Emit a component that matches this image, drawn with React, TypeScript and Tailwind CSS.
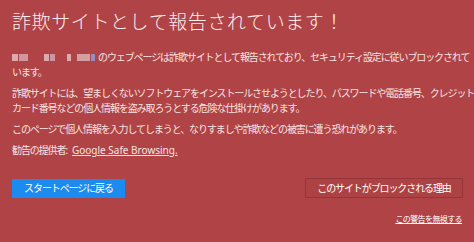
import React from 'react'

const font = "font-['Noto_Sans','Noto_Sans_CJK_JP',sans-serif]"

const Blur = ({ w, tint = 'bg-[#e7c3c6]' }: { w: string; tint?: string }) => (
  <span className={`inline-block h-[7px] ${w} ${tint} opacity-80 blur-[0.4px] align-middle`} />
)

const App: React.FC = () => {
  return (
    <div className={`w-[474px] h-[242px] overflow-hidden bg-[#b04345] text-[#f6e4e4] ${font}`}>
      <div className="px-3 pt-[7px]">
        <h1 className="text-[19px] leading-[30px] font-light tracking-[0.6px] text-[#fbeeee]">
          詐欺サイトとして報告されています！
        </h1>

        <div className="mt-[13px] text-[10px] leading-[15px] tracking-[-1.1px] flex flex-col gap-[6px] whitespace-nowrap">
          <p>
            <span className="inline-flex items-center gap-[1px] mr-[3px] tracking-normal">
              <Blur w="w-[6px]" />
              <Blur w="w-[9px]" tint="bg-[#d9aeb2]" />
              <span className="w-[14px]" />
              <Blur w="w-[5px]" />
              <Blur w="w-[5px]" tint="bg-[#d6a9b6]" />
              <span className="w-[10px]" />
              <Blur w="w-[4px]" />
              <span className="w-[4px]" />
              <Blur w="w-[13px]" tint="bg-[#dcb6ba]" />
              <Blur w="w-[4px]" tint="bg-[#8fa3e0]" />
            </span>
            のウェブページは詐欺サイトとして報告されており、セキュリティ設定に従いブロックされて
            <br />
            います。
          </p>
          <p>
            詐欺サイトには、望ましくないソフトウェアをインストールさせようとしたり、パスワードや電話番号、クレジット
            <br />
            カード番号などの個人情報を盗み取ろうとする危険な仕掛けがあります。
          </p>
          <p>このページで個人情報を入力してしまうと、なりすましや詐欺などの被害に遭う恐れがあります。</p>
          <p>
            勧告の提供者:
            <a href="#" className="ml-[5px] underline tracking-normal">
              Google Safe Browsing.
            </a>
          </p>
        </div>

        <div className="mt-[20px] flex items-center justify-between">
          <button className="w-[113px] h-[19px] bg-[#1c8bef] text-white text-[10px] tracking-[-1.1px] leading-none">
            スタートページに戻る
          </button>
          <button className="w-[158px] h-[20px] mr-[-1px] border border-[#963538] bg-[#ad4244] text-white text-[10px] tracking-[-1.1px] leading-none">
            このサイトがブロックされる理由
          </button>
        </div>

        <div className="mt-[15px] flex justify-end">
          <a href="#" className="text-[8px] tracking-[-0.6px] underline text-white">
            この警告を無視する
          </a>
        </div>
      </div>
    </div>
  )
}

export default App
